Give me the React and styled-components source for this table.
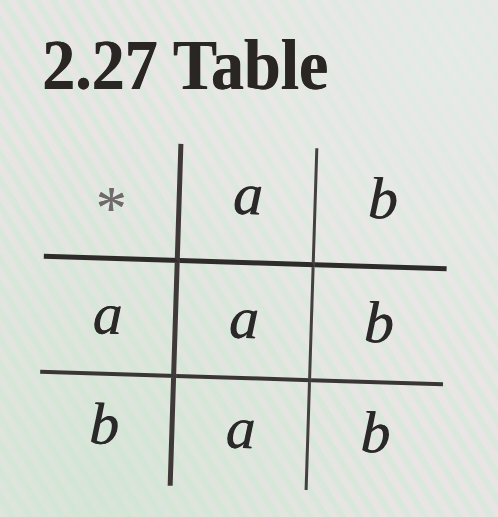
import React from "react";
import styled, { createGlobalStyle } from "styled-components";

const Global = createGlobalStyle`
  html, body { margin: 0; padding: 0; }
  body {
    width: 498px;
    height: 517px;
    overflow: hidden;
    background-color: #e2e9e1;
    background-image:
      radial-gradient(ellipse at 20% 95%, rgba(205, 228, 208, 0.6), transparent 55%),
      radial-gradient(ellipse at 90% 10%, rgba(230, 236, 232, 0.7), transparent 60%),
      repeating-linear-gradient(
        58deg,
        rgba(238, 226, 230, 0.6) 0px,
        rgba(238, 226, 230, 0.6) 6px,
        rgba(210, 230, 216, 0.5) 9px,
        rgba(210, 230, 216, 0.5) 14px
      );
  }
`;

const Page = styled.div`
  width: 498px;
  height: 517px;
  box-sizing: border-box;
  padding: 24px 0 0 42px;
  display: flex;
  flex-direction: column;
  filter: blur(0.6px);
`;

const Title = styled.h1`
  margin: 0;
  font-family: "Liberation Serif", "Times New Roman", serif;
  font-weight: 700;
  font-size: 66px;
  line-height: 76px;
  letter-spacing: 0px;
  color: #2a2624;
  text-shadow: 0.5px 0 0 #2a2624;
  transform: scaleY(1.08);
  transform-origin: left top;
`;

const Grid = styled.div`
  margin-top: 46px;
  width: 403px;
  display: grid;
  grid-template-columns: 136px 135px 132px;
  grid-template-rows: 119px 115px 108px;
  transform: rotate(1.8deg);
  transform-origin: center center;
`;

const Cell = styled.div`
  display: flex;
  align-items: center;
  justify-content: center;
  box-sizing: border-box;
  font-family: "Liberation Serif", "Times New Roman", serif;
  font-style: ${(p) => (p.$op ? "normal" : "italic")};
  font-size: ${(p) => (p.$op ? "62px" : "59px")};
  color: ${(p) => (p.$op ? "#6e6c6a" : "#2a2828")};
  text-shadow: ${(p) => (p.$op ? "0.4px 0 0 #6e6c6a" : "0.7px 0 0 #2a2828")};
  padding-top: ${(p) => (p.$op ? "18px" : "0")};
  padding-bottom: ${(p) =>
    p.$op ? "0" : p.$row === 0 ? "18px" : p.$row === 1 ? "4px" : "12px"};
  border-right: ${(p) =>
    p.$col === 0
      ? "5px solid #3f3a39"
      : p.$col === 1
      ? "3px solid #454040"
      : "none"};
  border-bottom: ${(p) =>
    p.$row === 0
      ? "5px solid #2e2b2b"
      : p.$row === 1
      ? "4px solid #3a3636"
      : "none"};
`;

const rows = [
  ["*", "a", "b"],
  ["a", "a", "b"],
  ["b", "a", "b"],
];

export default function App() {
  return (
    <>
      <Global />
      <Page>
        <Title>2.27 Table</Title>
        <Grid>
          {rows.map((r, ri) =>
            r.map((v, ci) => (
              <Cell key={`${ri}-${ci}`} $row={ri} $col={ci} $op={v === "*"}>
                {v}
              </Cell>
            ))
          )}
        </Grid>
      </Page>
    </>
  );
}
